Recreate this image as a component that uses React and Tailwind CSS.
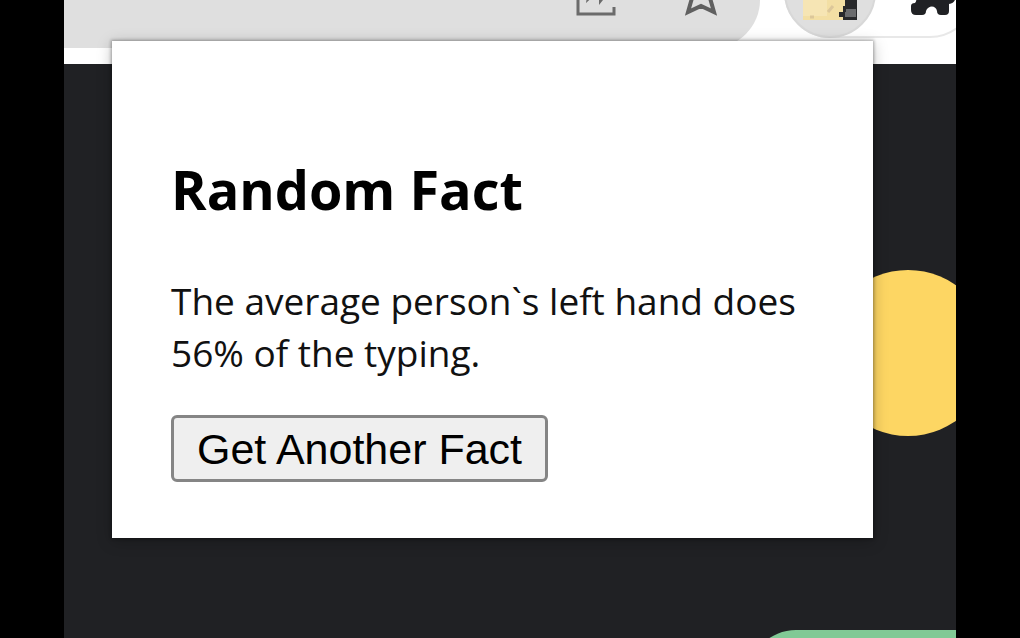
import { useState } from 'react'

const FACTS = ['The average person`s left hand does 56% of the typing.']

function ShareIcon() {
  return (
    <svg width="40" height="40" viewBox="0 0 40 40" fill="none" stroke="#6b6b6b" strokeWidth="3">
      <path d="M14 4H2v34h36v-7" />
      <path d="M10 27c1-9 6-15 14-16V4l11 10-12 15v-9c-5 0-9 3-13 7z" fill="#6b6b6b" stroke="none" />
    </svg>
  )
}

function StarIcon() {
  return (
    <svg width="42" height="40" viewBox="0 0 42 40" fill="none" stroke="#606060" strokeWidth="4">
      <path d="M21 2l5 11 12 1-8 8 4 14-13-6-13 6 4-14-8-8 12-1z" />
    </svg>
  )
}

function NoteIcon() {
  return (
    <svg width="54" height="54" viewBox="0 0 54 54">
      <path d="M0 0h54v54H0z" fill="#f3dfa4" />
      <path d="M0 0h24v50H0z" fill="#f6e5b4" />
      <path d="M25 46l5-6M7 51h4" stroke="#dcc79a" strokeWidth="3" />
      <path d="M42 34h12v20H40v-3h-4v-5h4v-6h2z" fill="#28292b" />
      <path d="M43 43h10v8H42v-5h1z" fill="#6a6b6d" />
    </svg>
  )
}

function PuzzleIcon() {
  return (
    <svg width="46" height="44" viewBox="0 0 46 44" fill="#202124">
      <path d="M4 10h10a6 6 0 0 1 13 0h8q4 0 4 4v4c9 0 9 13 0 14v7q0 4-4 4h-4q-4 0-4-4c-1-6-9-6-11 0q0 4-4 4H6q-5 0-5-5v-4q0-3 4-3 2-2 1-5-1-3-5-3V14q0-4 3-4z" />
    </svg>
  )
}

export default function App() {
  const [index, setIndex] = useState(0)

  const nextFact = () => setIndex((index + 1) % FACTS.length)

  return (
    <div className="min-h-screen bg-black px-16 flex">
      <div className="relative flex-1 overflow-hidden bg-[#202124]">
        {/* Browser toolbar */}
        <div className="h-16 pb-4 flex items-end overflow-hidden bg-white">
          <div className="flex-1 h-24 rounded-r-full bg-[#dfdfdf] flex items-end justify-end gap-16 pr-[38px] pb-8">
            <button aria-label="Share"><ShareIcon /></button>
            <button aria-label="Bookmark"><StarIcon /></button>
          </div>
          <div className="h-[92px] w-48 shrink-0 ml-6 -mr-5 mb-[10px] rounded-full border-2 border-[#e8e8e8] flex items-end">
            <button aria-label="Random Fact" className="-m-[2px] size-[92px] shrink-0 rounded-full bg-[#dfdfdf] border-2 border-[#d8d8d8] flex items-end justify-center pb-4">
              <NoteIcon />
            </button>
            <button aria-label="Extensions" className="ml-9 mb-5 shrink-0"><PuzzleIcon /></button>
          </div>
        </div>

        {/* Page shapes behind the popup */}
        <div className="absolute top-[270px] -right-[35px] size-[166px] rounded-full bg-[#fdd663]" />
        <div className="absolute top-[630px] -right-16 w-[272px] h-24 rounded-[48px] bg-[#81c995]" />

        <main className="absolute top-[41px] left-12 right-[83px] bg-white px-[59px] pt-[110px] pb-14 shadow-[0_0_3px_1px_rgba(0,0,0,0.3),0_3px_14px_rgba(0,0,0,0.25)]">
          <h1 className="font-['Open_Sans'] font-bold text-[54px] leading-[76px] text-black">Random Fact</h1>
          <p className="mt-12 font-['Open_Sans'] text-[37px] leading-[52px] text-[#111111]">{FACTS[index]}</p>
          <button
            onClick={nextFact}
            className="mt-9 px-[23px] h-[67px] rounded-md border-[3px] border-[#858585] bg-[#efefef] font-['Liberation_Sans'] text-[43px] leading-[60px] text-black"
          >
            Get Another Fact
          </button>
        </main>
      </div>
    </div>
  )
}
